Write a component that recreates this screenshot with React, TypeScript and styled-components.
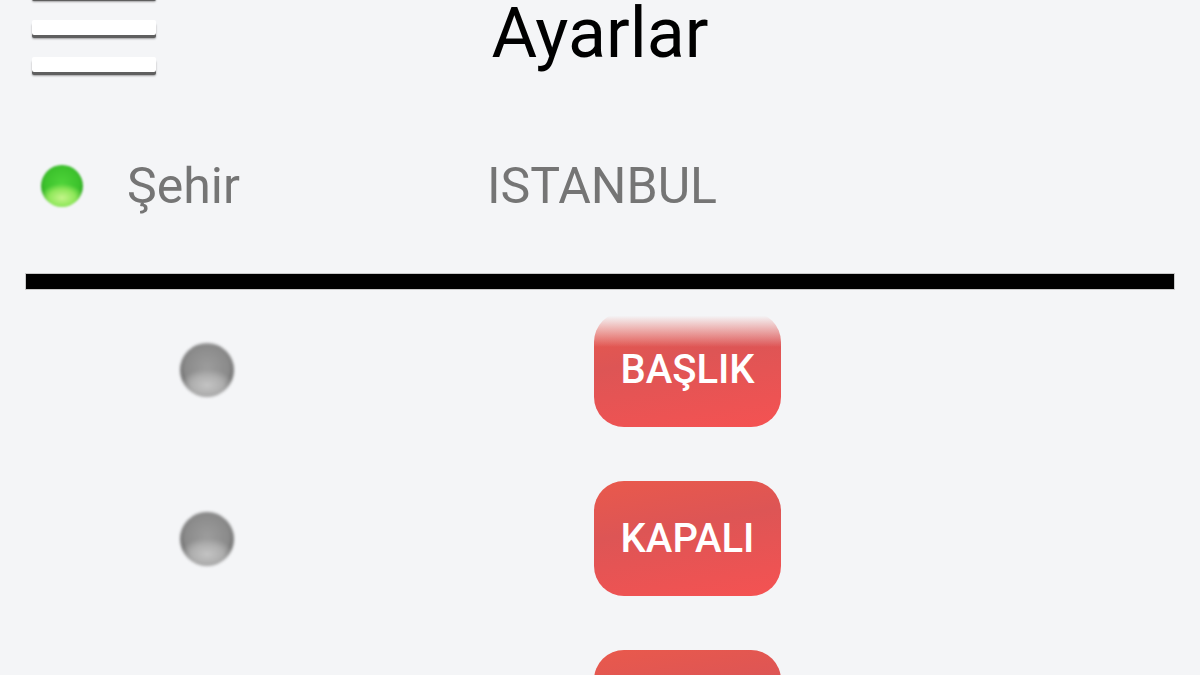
import React from "react";
import styled, { createGlobalStyle } from "styled-components";

const GlobalStyle = createGlobalStyle`
  html, body {
    margin: 0;
    padding: 0;
    background: #f4f5f7;
    font-family: Roboto, "Noto Sans", "Liberation Sans", sans-serif;
    overflow: hidden;
  }
`;

const Screen = styled.div`
  width: 1200px;
  height: 675px;
  overflow: hidden;
  background: #f4f5f7;
`;

const Header = styled.header`
  display: grid;
  grid-template-columns: 1fr auto 1fr;
  align-items: start;
  height: 68px;
`;

const MenuButton = styled.div`
  display: flex;
  flex-direction: column;
  gap: 22px;
  width: 124px;
  margin-left: 32px;
  margin-top: -17px;
`;

const MenuBar = styled.span`
  display: block;
  height: 15px;
  background: #ffffff;
  border-radius: 2px;
  box-shadow: 0 3px 0 #5f5f5f, 0 4px 2px rgba(0, 0, 0, 0.35);
`;

const Title = styled.h1`
  margin: 0;
  font-size: 70px;
  line-height: 66px;
  font-weight: 400;
  color: #000;
`;

const CityRow = styled.div`
  display: flex;
  align-items: center;
  height: 50px;
  margin-top: 93px;
  padding-left: 41px;
`;

const Led = styled.span<{ $on?: boolean; $size: number }>`
  flex: none;
  width: ${p => p.$size}px;
  height: ${p => p.$size}px;
  border-radius: 50%;
  background: ${p =>
    p.$on
      ? "radial-gradient(ellipse 70% 45% at 50% 78%, #c4f58a 0%, #8fe75a 45%, transparent 75%), radial-gradient(circle at 50% 45%, #4fd43a 0%, #3cc22c 55%, #2a8f1f 85%, #1f6d18 100%)"
      : "radial-gradient(ellipse 65% 40% at 50% 78%, #c4c4c4 0%, #aeaeae 45%, transparent 75%), radial-gradient(circle at 50% 45%, #9c9c9c 0%, #8a8a8a 55%, #555 82%, #444 100%)"};
  filter: blur(${p => (p.$on ? 1 : 1.6)}px);
`;

const Label = styled.span<{ $width?: number }>`
  font-size: 50px;
  line-height: 50px;
  color: #757575;
  width: ${p => (p.$width ? `${p.$width}px` : "auto")};
`;

const Divider = styled.div`
  height: 15px;
  margin: 62px 25px 0;
  background: #000;
  border: 1px solid #c9c9c9;
`;

const List = styled.div`
  position: relative;
  display: flex;
  flex-direction: column;
  gap: 54px;
  padding-top: 22px;

  &::before {
    content: "";
    position: absolute;
    left: 0;
    right: 0;
    top: 0;
    height: 57px;
    background: linear-gradient(
      to bottom,
      #f4f5f7 0%,
      #f4f5f7 45%,
      rgba(244, 245, 247, 0) 100%
    );
    z-index: 2;
  }
`;

const ListRow = styled.div`
  display: flex;
  align-items: center;
  padding-left: 180px;
`;

const ToggleButton = styled.button`
  flex: none;
  width: 187px;
  height: 115px;
  margin-left: 360px;
  border: none;
  border-radius: 30px;
  background: linear-gradient(170deg, #e9594c 0%, #dd5555 40%, #f55252 100%);
  color: #fff;
  font-family: Roboto, "Noto Sans", "Liberation Sans", sans-serif;
  font-size: 40px;
  font-weight: 500;
  padding: 0;
`;

const items = ["BAŞLIK", "KAPALI", "KAPALI"];

export default function App() {
  return (
    <Screen>
      <GlobalStyle />
      <Header>
        <MenuButton>
          <MenuBar />
          <MenuBar />
          <MenuBar />
        </MenuButton>
        <Title>Ayarlar</Title>
        <div />
      </Header>
      <CityRow>
        <Led $on $size={42} />
        <Label $width={360} style={{ marginLeft: 44 }}>Şehir</Label>
        <Label>ISTANBUL</Label>
      </CityRow>
      <Divider />
      <List>
        {items.map((text, i) => (
          <ListRow key={i}>
            <Led $size={54} />
            <ToggleButton>{text}</ToggleButton>
          </ListRow>
        ))}
      </List>
    </Screen>
  );
}
